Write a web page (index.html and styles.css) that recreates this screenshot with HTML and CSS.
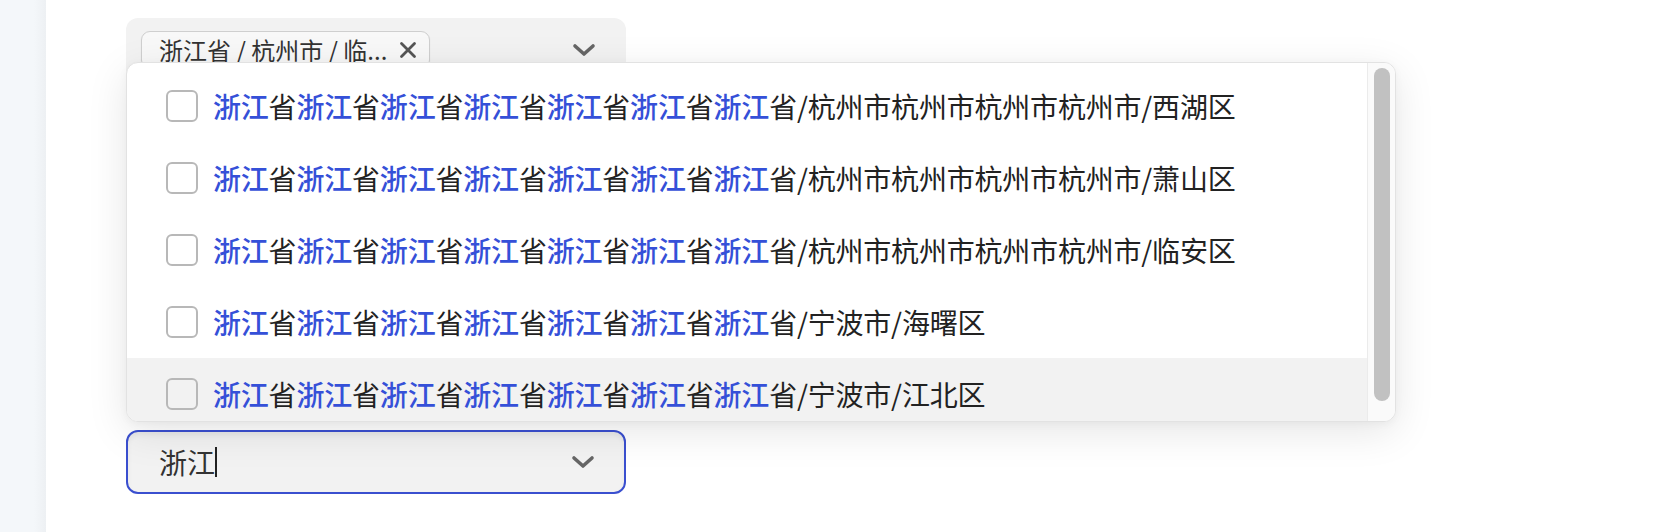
FILE: index.html
```html
<!DOCTYPE html>
<html lang="zh">
<head>
<meta charset="utf-8">
<link rel="stylesheet" href="styles.css">
</head>
<body>
<div class="page">
  <aside class="sidebar"></aside>
  <main class="content">
    <div class="select select-multi">
      <span class="tag">
        <span class="tag-text">浙江省 / 杭州市 / 临...</span>
        <svg class="tag-close" viewBox="0 0 18 18" width="18" height="18"><path d="M2.5 2.5L15.5 15.5M15.5 2.5L2.5 15.5" stroke="#555" stroke-width="2.8" stroke-linecap="round" fill="none"/></svg>
      </span>
      <svg class="chevron" viewBox="0 0 24 14" width="24" height="14"><path d="M3 3L12 11L21 3" stroke="#666" stroke-width="3.6" stroke-linecap="round" stroke-linejoin="round" fill="none"/></svg>
    </div>
    <div class="select select-focus">
      <span class="input-text">浙江</span><span class="caret"></span>
      <span class="spacer"></span>
      <svg class="chevron" viewBox="0 0 24 14" width="24" height="14"><path d="M3 3L12 11L21 3" stroke="#666" stroke-width="3.6" stroke-linecap="round" stroke-linejoin="round" fill="none"/></svg>
      <div class="dropdown">
        <div class="options">
          <div class="option"><span class="checkbox"></span><span class="label"><b>浙江</b>省<b>浙江</b>省<b>浙江</b>省<b>浙江</b>省<b>浙江</b>省<b>浙江</b>省<b>浙江</b>省/杭州市杭州市杭州市杭州市/西湖区</span></div>
          <div class="option"><span class="checkbox"></span><span class="label"><b>浙江</b>省<b>浙江</b>省<b>浙江</b>省<b>浙江</b>省<b>浙江</b>省<b>浙江</b>省<b>浙江</b>省/杭州市杭州市杭州市杭州市/萧山区</span></div>
          <div class="option"><span class="checkbox"></span><span class="label"><b>浙江</b>省<b>浙江</b>省<b>浙江</b>省<b>浙江</b>省<b>浙江</b>省<b>浙江</b>省<b>浙江</b>省/杭州市杭州市杭州市杭州市/临安区</span></div>
          <div class="option"><span class="checkbox"></span><span class="label"><b>浙江</b>省<b>浙江</b>省<b>浙江</b>省<b>浙江</b>省<b>浙江</b>省<b>浙江</b>省<b>浙江</b>省/宁波市/海曙区</span></div>
          <div class="option option-hover"><span class="checkbox"></span><span class="label"><b>浙江</b>省<b>浙江</b>省<b>浙江</b>省<b>浙江</b>省<b>浙江</b>省<b>浙江</b>省<b>浙江</b>省/宁波市/江北区</span></div>
        </div>
        <div class="scrollbar"><div class="thumb"></div></div>
      </div>
    </div>
  </main>
</div>
</body>
</html>
```

FILE: styles.css
```css
* { box-sizing: border-box; }
html, body {
  margin: 0;
  padding: 0;
  background: #ffffff;
  font-family: "Noto Sans CJK SC", "Noto Sans", sans-serif;
  color: #222;
}
.page {
  display: flex;
  width: 1676px;
  height: 532px;
  overflow: hidden;
}
.sidebar {
  width: 46px;
  flex: none;
  background: linear-gradient(to right, #f4f7fa 0, #f4f7fa 34px, #edf0f3 46px);
}
.content {
  display: flex;
  flex-direction: column;
  gap: 348px;
  padding: 18px 0 0 80px;
}
.select {
  position: relative;
  display: flex;
  align-items: center;
  width: 500px;
  height: 64px;
  border-radius: 12px;
  background: #f2f2f2;
}
.select-multi {
  padding: 0 30px 0 15px;
  justify-content: space-between;
}
.tag {
  display: flex;
  align-items: center;
  gap: 12px;
  height: 38px;
  padding: 0 12px 0 17px;
  border: 1px solid #cfcfcf;
  border-radius: 9px;
  background: #f8f8f8;
  box-shadow: 0 1px 2px rgba(0,0,0,0.06);
}
.tag-text {
  font-size: 24px;
  line-height: 1;
  color: #333;
}
.tag-close { display: block; }
.chevron { display: block; flex: none; }
.select-focus {
  border: 2px solid #3a4fcf;
  padding: 0 29px 0 31px;
  box-shadow: inset 0 3px 5px rgba(0,0,0,0.05);
}
.input-text {
  font-size: 28px;
  line-height: 1;
  color: #333;
}
.caret {
  width: 2px;
  height: 30px;
  background: #222;
}
.spacer { flex: 1; }
.dropdown {
  position: absolute;
  left: -2px;
  bottom: calc(100% + 10px);
  width: 1270px;
  height: 360px;
  display: flex;
  background: #fff;
  border: 1px solid #e2e2e2;
  border-radius: 12px;
  overflow: hidden;
  box-shadow: 0 10px 40px rgba(0,0,0,0.10), 0 2px 8px rgba(0,0,0,0.04);
  z-index: 5;
}
.options {
  flex: 1;
  padding-top: 7px;
  overflow: hidden;
}
.option {
  display: flex;
  align-items: center;
  gap: 15px;
  height: 72px;
  padding-left: 39px;
}
.option-hover { background: #f2f2f2; }
.checkbox {
  width: 32px;
  height: 32px;
  flex: none;
  border: 2px solid #b8b8b8;
  border-radius: 6px;
}
.label {
  font-size: 28px;
  line-height: 1;
  color: #222;
  white-space: nowrap;
  letter-spacing: -0.2px;
}
.label b {
  font-weight: 500;
  color: #3550d8;
}
.scrollbar {
  width: 28px;
  flex: none;
  background: #fafafa;
  border-left: 1px solid #ebebeb;
  padding: 5px 0 0 6px;
}
.thumb {
  width: 16px;
  height: 333px;
  border-radius: 8px;
  background: #c1c1c1;
}
```
